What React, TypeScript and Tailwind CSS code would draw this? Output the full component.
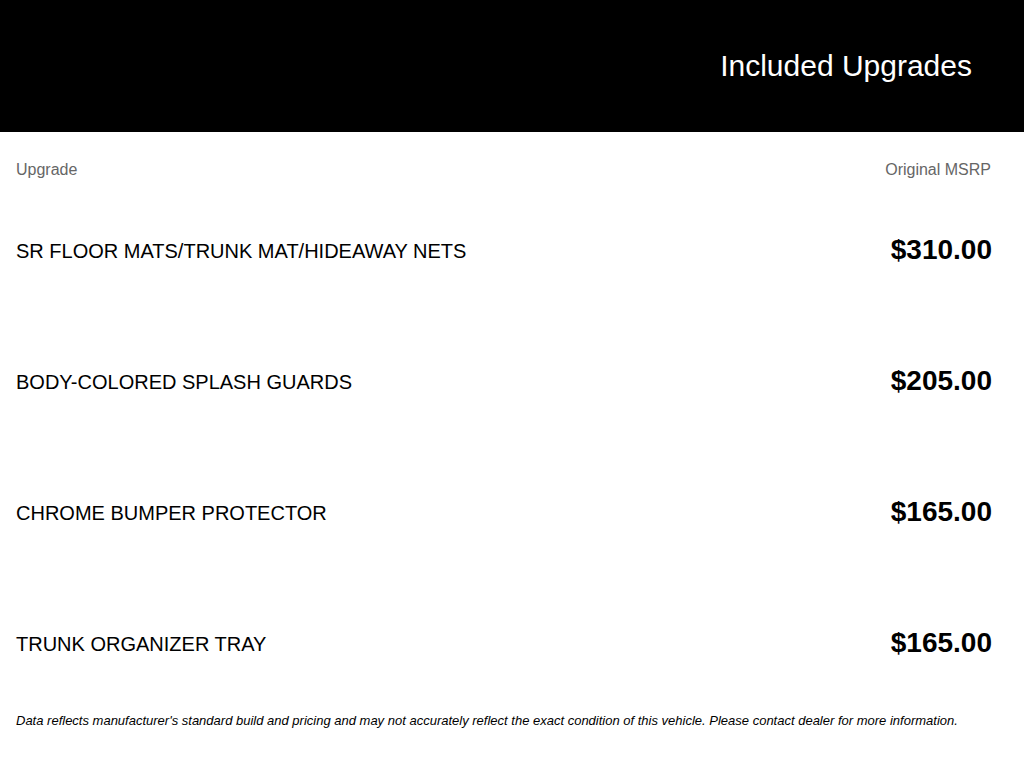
export default function App() {
  const rows = [
    ["SR FLOOR MATS/TRUNK MAT/HIDEAWAY NETS", "$310.00"],
    ["BODY-COLORED SPLASH GUARDS", "$205.00"],
    ["CHROME BUMPER PROTECTOR", "$165.00"],
    ["TRUNK ORGANIZER TRAY", "$165.00"],
  ];
  return (
    <div className="w-[1024px] h-[768px] bg-white" style={{ fontFamily: '"Liberation Sans", Arial, sans-serif' }}>
      <div className="h-[132px] bg-black flex items-center justify-end pr-[52px]">
        <h1 className="text-white text-[30px] leading-[34px] mt-[-1px]">Included Upgrades</h1>
      </div>
      <div className="pl-4 pr-[33px]">
        <div className="flex justify-between pt-[29px] text-[16px] leading-[18px] text-[#666666]">
          <span>Upgrade</span>
          <span>Original MSRP</span>
        </div>
        <div className="mt-[6px]">
          {rows.map(([name, price], i) => (
            <div key={i} className="h-[131px] flex items-center justify-between">
              <span className="text-[20px] leading-[24px] text-black">{name}</span>
              <span className="text-[28px] leading-[30px] font-bold text-black mr-[-1px] mt-[-2px]">{price}</span>
            </div>
          ))}
        </div>
        <p className="mt-[4px] text-[13px] leading-[15px] italic text-black">
          Data reflects manufacturer's standard build and pricing and may not accurately reflect the exact condition of this vehicle. Please contact dealer for more information.
        </p>
      </div>
    </div>
  );
}
